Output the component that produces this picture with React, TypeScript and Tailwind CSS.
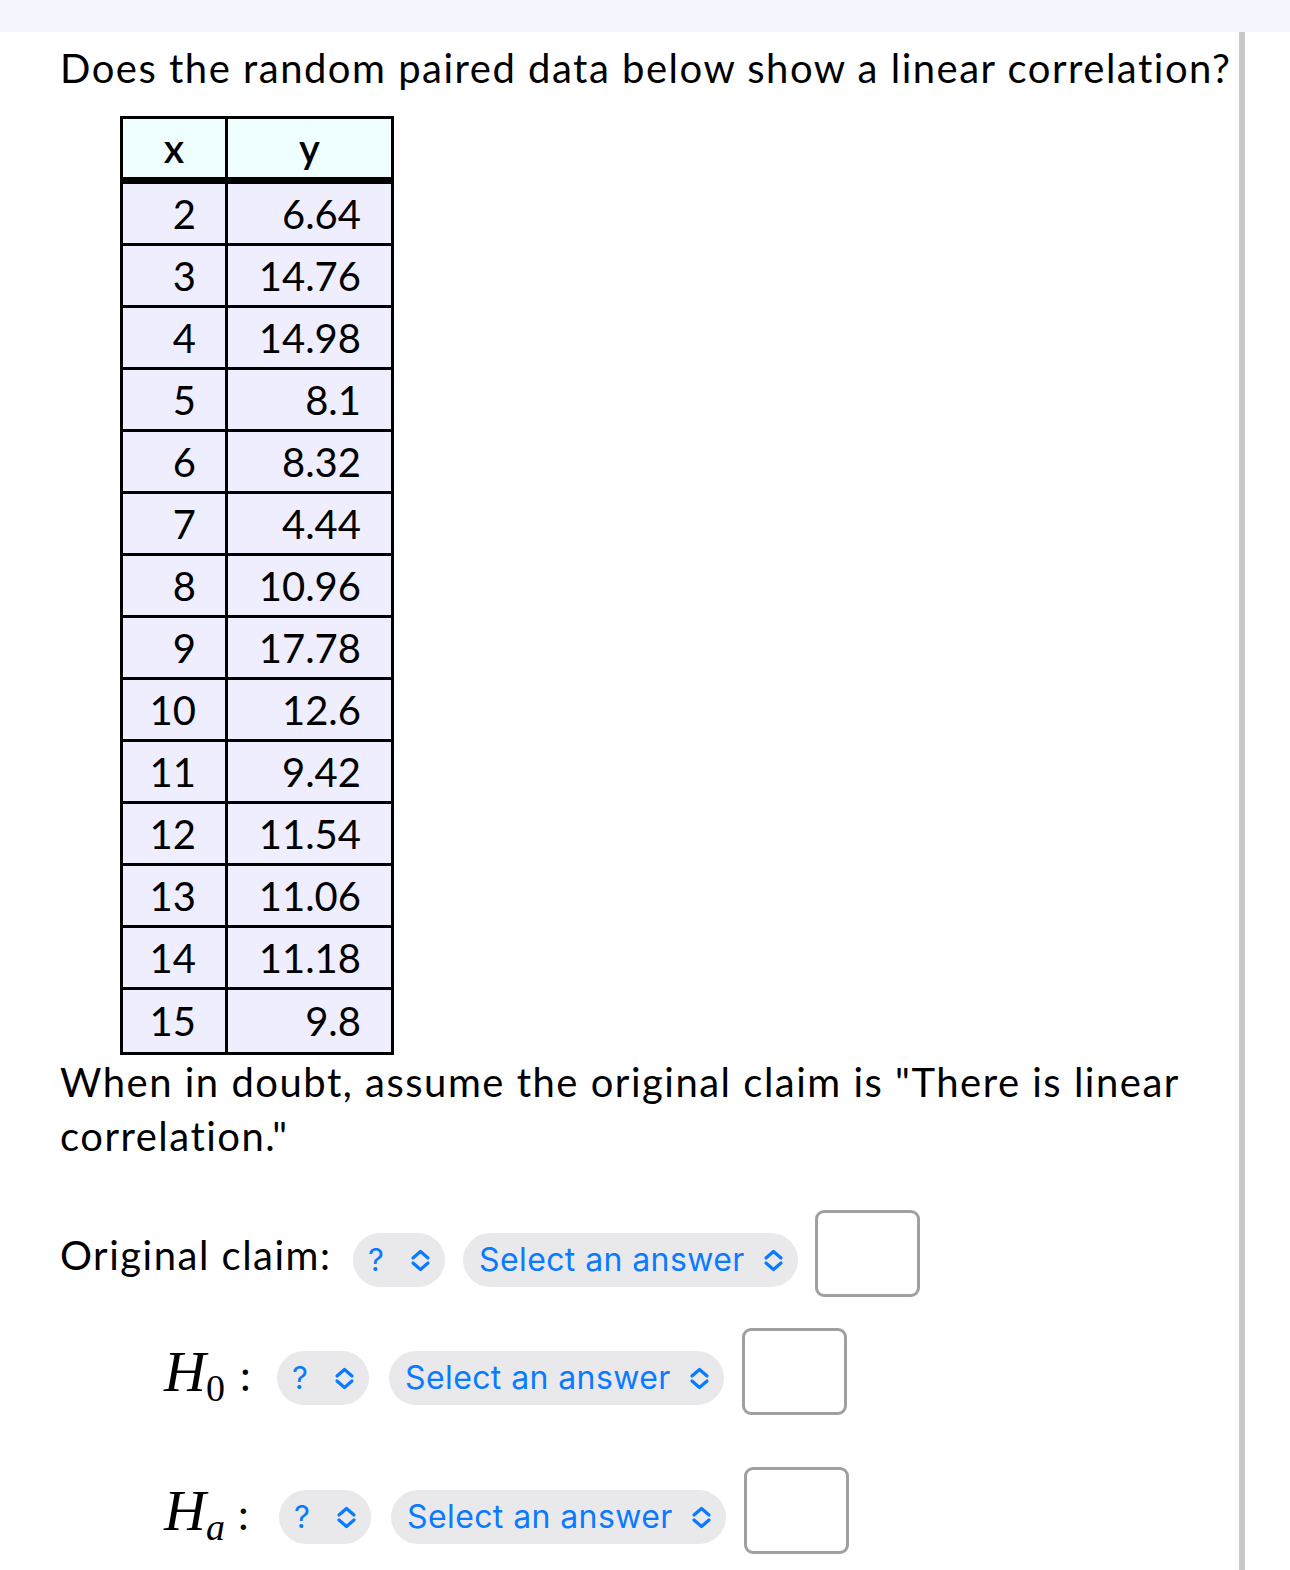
import React from "react";

const rows: [string, string][] = [
  ["2", "6.64"],
  ["3", "14.76"],
  ["4", "14.98"],
  ["5", "8.1"],
  ["6", "8.32"],
  ["7", "4.44"],
  ["8", "10.96"],
  ["9", "17.78"],
  ["10", "12.6"],
  ["11", "9.42"],
  ["12", "11.54"],
  ["13", "11.06"],
  ["14", "11.18"],
  ["15", "9.8"],
];

function Chevrons() {
  return (
    <svg width="21" height="23" viewBox="0 0 21 23" fill="none" stroke="#0a7aff" strokeWidth="3.2" strokeLinecap="round" strokeLinejoin="round">
      <path d="M3 9 L10.5 2.5 L18 9" />
      <path d="M3 14 L10.5 20.5 L18 14" />
    </svg>
  );
}

function QPill() {
  return (
    <div className="flex h-[54px] w-[92px] items-center justify-between rounded-full bg-[#e9e9eb] pl-[15px] pr-[14px] text-[31px] text-[#0a7aff]" style={{ fontFamily: "Inter, sans-serif" }}>
      <span>?</span>
      <Chevrons />
    </div>
  );
}

function SelectPill() {
  return (
    <div className="flex h-[54px] w-[335px] items-center justify-between whitespace-nowrap rounded-full bg-[#e9e9eb] pl-[16px] pr-[14px] text-[32px] tracking-[0.4px] text-[#0a7aff]" style={{ fontFamily: "Inter, sans-serif" }}>
      <span>Select an answer</span>
      <Chevrons />
    </div>
  );
}

function Box() {
  return <div className="h-[87px] w-[105px] rounded-[9px] border-[3px] border-[#a0a0a0] bg-white" />;
}

export default function App() {
  return (
    <div className="min-h-[1570px] w-[1290px] bg-white text-black" style={{ fontFamily: "Lato, sans-serif" }}>
      <div className="h-[32px] w-full bg-[#f5f6fe]" />
      <div className="flex">
        <div className="w-[1239px] pl-[60px]">
          <div className="mt-[9px] whitespace-nowrap text-[40px] leading-[54px] tracking-[1.5px]">Does the random paired data below show a linear correlation?</div>
          <div className="ml-[60px] mt-[21px] w-[274px] border-[3px] border-black text-[40px] leading-[54px]">
            <div className="flex h-[65px] border-b-[7px] border-black bg-[#effefe] font-semibold">
              <div className="flex w-[105px] items-center justify-center border-r-[3px] border-black">x</div>
              <div className="flex flex-1 items-center justify-center">y</div>
            </div>
            {rows.map(([x, y], i) => (
              <div key={x} className={`flex h-[62px] bg-[#eeeefe] ${i < rows.length - 1 ? "border-b-[3px]" : "h-[59px]"} border-black`}>
                <div className="flex w-[105px] items-center justify-end border-r-[3px] border-black pr-[29px]">{x}</div>
                <div className="flex flex-1 items-center justify-end pr-[30px]">{y}</div>
              </div>
            ))}
          </div>
          <div className="pr-[8px] text-[40px] leading-[54px] tracking-[1.5px]">
            When in doubt, assume the original claim is "There is linear correlation."
          </div>

          <div className="mt-[47px] flex items-start">
            <div className="mt-[18px] w-[293px] whitespace-nowrap text-[40px] leading-[54px] tracking-[1.5px]">Original claim:</div>
            <div className="mt-[23px]"><QPill /></div>
            <div className="ml-[18px] mt-[23px]"><SelectPill /></div>
            <div className="ml-[17px]"><Box /></div>
          </div>

          <div className="mt-[31px] flex items-start">
            <div className="ml-[104px] mt-[14px] flex w-[113px] items-baseline leading-[60px]" style={{ fontFamily: "'Liberation Serif', serif" }}>
              <span className="text-[58px] italic">H</span>
              <span className="relative top-[10px] text-[38px]">0</span>
              <span className="ml-[14px] text-[46px]">:</span>
            </div>
            <div className="mt-[23px]"><QPill /></div>
            <div className="ml-[20px] mt-[23px]"><SelectPill /></div>
            <div className="ml-[18px]"><Box /></div>
          </div>

          <div className="mt-[52px] flex items-start">
            <div className="ml-[104px] mt-[14px] flex w-[115px] items-baseline leading-[60px]" style={{ fontFamily: "'Liberation Serif', serif" }}>
              <span className="text-[58px] italic">H</span>
              <span className="relative top-[10px] text-[38px] italic">a</span>
              <span className="ml-[12px] text-[46px]">:</span>
            </div>
            <div className="mt-[23px]"><QPill /></div>
            <div className="ml-[20px] mt-[23px]"><SelectPill /></div>
            <div className="ml-[18px]"><Box /></div>
          </div>
        </div>
        <div className="min-h-[1538px] w-[6px] bg-[#c8c8c8]" />
        <div className="flex-1 bg-white" />
      </div>
    </div>
  );
}
